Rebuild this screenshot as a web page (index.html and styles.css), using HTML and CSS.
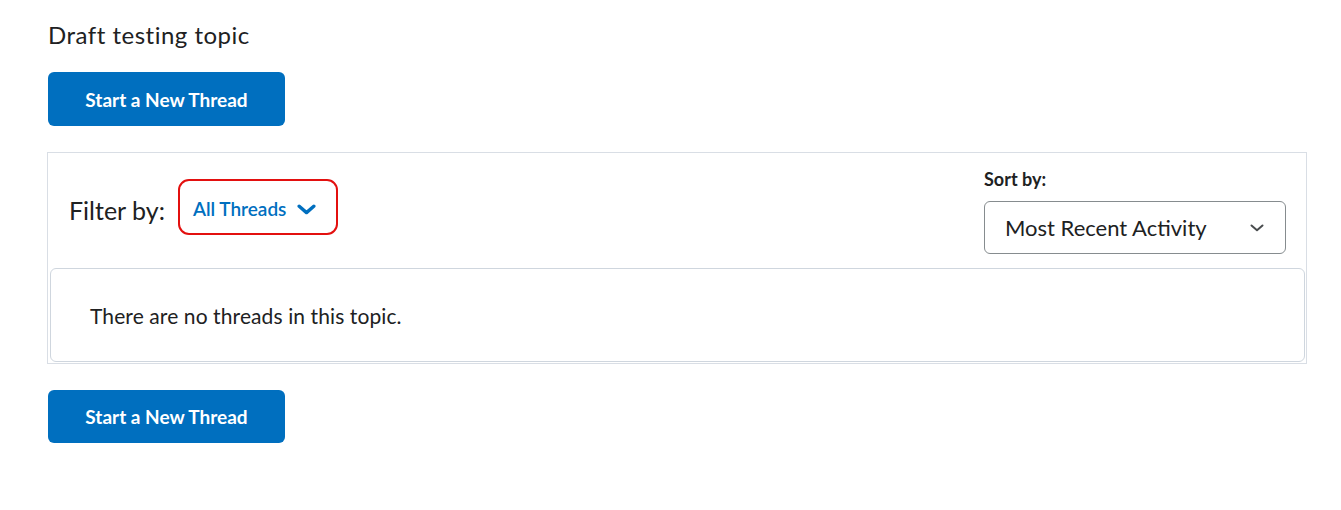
FILE: index.html
```html
<!DOCTYPE html>
<html lang="en">
<head>
<meta charset="utf-8">
<title>Draft testing topic</title>
<link rel="stylesheet" href="styles.css">
</head>
<body>
<main class="page">
  <h1 class="topic-title">Draft testing topic</h1>
  <button class="btn-primary" type="button">Start a New Thread</button>

  <section class="threads-panel">
    <div class="panel-header">
      <div class="filter-group">
        <span class="filter-label">Filter by:</span>
        <button class="filter-toggle" type="button">
          <span>All Threads</span>
          <svg class="chev-blue" width="19" height="11" viewBox="0 0 19 11" aria-hidden="true">
            <path d="M2.2 2.2 L9.5 8.6 L16.8 2.2" fill="none" stroke="currentColor" stroke-width="3.4" stroke-linecap="round" stroke-linejoin="round"/>
          </svg>
        </button>
      </div>
      <div class="sort-group">
        <label class="sort-label">Sort by:</label>
        <div class="sort-select">
          <span>Most Recent Activity</span>
          <svg class="chev-gray" width="14" height="8" viewBox="0 0 14 8" aria-hidden="true">
            <path d="M1.5 1.5 L7 6.2 L12.5 1.5" fill="none" stroke="currentColor" stroke-width="2" stroke-linecap="round" stroke-linejoin="round"/>
          </svg>
        </div>
      </div>
    </div>
    <div class="empty-box">There are no threads in this topic.</div>
  </section>

  <button class="btn-primary btn-bottom" type="button">Start a New Thread</button>
</main>
</body>
</html>
```

FILE: styles.css
```css
* { box-sizing: border-box; }

body {
  margin: 0;
  background: #ffffff;
  font-family: Lato, "Noto Sans", "Liberation Sans", sans-serif;
  color: #202122;
}

.page {
  padding: 20px 0 0 48px;
  width: 1308px;
  display: flex;
  flex-direction: column;
  align-items: flex-start;
}

.topic-title {
  margin: 0;
  font-size: 24px;
  font-weight: 400;
  line-height: 29px;
  letter-spacing: 0.5px;
  color: #202122;
}

.btn-primary {
  margin-top: 23px;
  width: 237px;
  height: 54px;
  border: none;
  border-radius: 6px;
  background: #006fbf;
  color: #ffffff;
  font-family: Lato, "Noto Sans", sans-serif;
  font-size: 19px;
  font-weight: 700;
  cursor: pointer;
}

.btn-bottom { margin-top: 26px; height: 53px; }

.threads-panel {
  margin-top: 26px;
  margin-left: -1px;
  width: 1260px;
  border: 1px solid #d9dee5;
  padding: 0 0 0 2px;
}

.panel-header {
  display: flex;
  justify-content: space-between;
  align-items: flex-start;
  padding: 17px 20px 14px 19px;
}

.filter-group {
  display: flex;
  align-items: center;
  margin-top: 9px;
}

.filter-label {
  font-size: 25px;
  margin-right: 13px;
  padding-top: 6px;
  color: #202122;
}

.filter-toggle {
  display: flex;
  align-items: center;
  gap: 11px;
  width: 160px;
  height: 56px;
  padding: 3px 0 0 13px;
  border: 2.5px solid #e3100f;
  border-radius: 11px;
  background: #fff;
  color: #006fbf;
  font-family: Lato, "Noto Sans", sans-serif;
  font-size: 19px;
  font-weight: 600;
}

.chev-blue { color: #006fbf; margin-top: 1px; }

.sort-group {
  display: flex;
  flex-direction: column;
  gap: 12px;
}

.sort-label {
  font-size: 18px;
  line-height: 19px;
  font-weight: 700;
  color: #202122;
}

.sort-select {
  width: 302px;
  height: 53px;
  border: 1px solid #868c8f;
  border-radius: 6px;
  display: flex;
  align-items: center;
  justify-content: space-between;
  padding: 0 21px 0 20px;
  font-size: 22px;
  color: #202122;
}

.chev-gray { color: #494c4e; }

.empty-box {
  margin: 0 1px 1px 0;
  height: 94px;
  border: 1px solid #cfd6de;
  border-radius: 6px;
  display: flex;
  align-items: center;
  padding-left: 39px;
  font-size: 21px;
  letter-spacing: 0.1px;
  color: #202122;
}
```
